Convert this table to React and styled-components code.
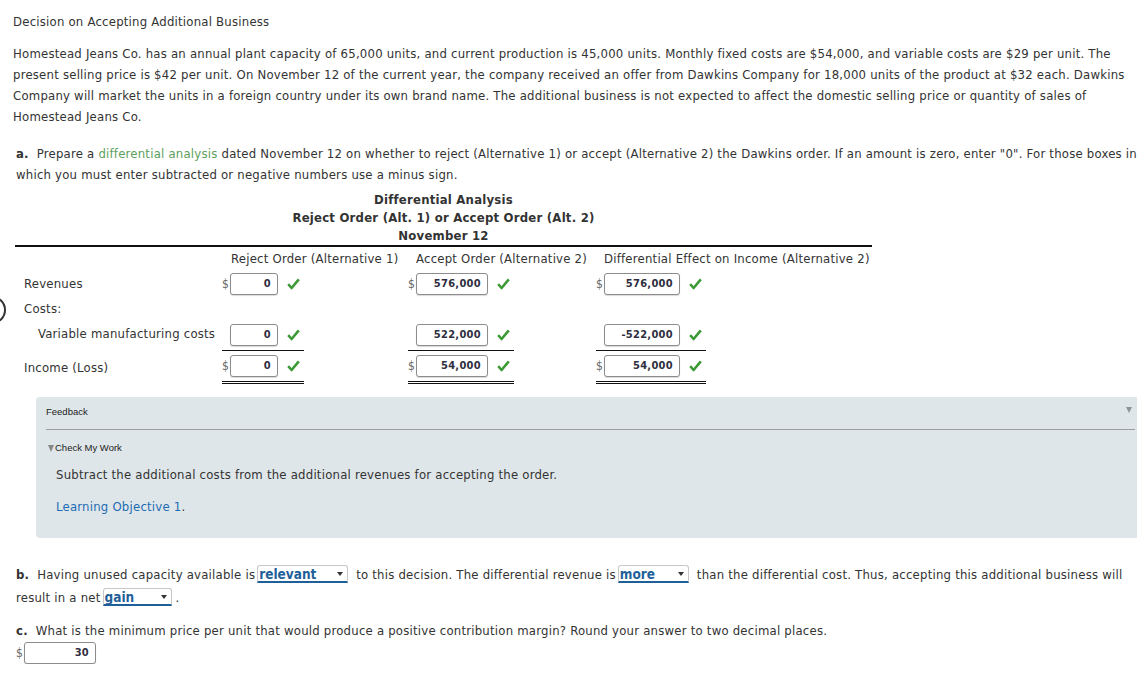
import React from "react";
import styled, { createGlobalStyle } from "styled-components";

const Global = createGlobalStyle`
  html, body { margin: 0; padding: 0; background: #fff; overflow: hidden; }
  body {
    font-family: "DejaVu Sans", Verdana, sans-serif;
    font-stretch: semi-condensed;
    font-size: 13px;
    letter-spacing: 0.22px;
    color: #333;
  }
`;

const Page = styled.div`
  position: relative;
  width: 1150px;
  padding: 12px 0 0 13px;
  box-sizing: border-box;
`;

const Title = styled.div`
  line-height: 20px;
`;

const Para = styled.p`
  margin: ${(p) => p.$mt || 0}px 0 0 ${(p) => p.$ml || 0}px;
  line-height: ${(p) => p.$lh || 21}px;
  white-space: nowrap;
`;

const Bold = styled.b`
  font-weight: bold;
  margin-right: 4px;
`;

const GreenLink = styled.span`
  color: #5e9e5e;
`;

const BlueLink = styled.span`
  color: #1c6cb4;
`;

const Heading = styled.div`
  width: 857px;
  margin: 6px 0 0 2px;
  text-align: center;
  font-weight: bold;
  line-height: 18px;
`;

const Table = styled.div`
  width: 857px;
  margin-left: 2px;
  border-top: 2px solid #111;
  display: grid;
  grid-template-columns: 207px 186px 188px 276px;
`;

const HeadCell = styled.div`
  height: 24px;
  line-height: 24px;
  padding-left: ${(p) => p.$pl || 8}px;
  white-space: nowrap;
`;

const LabelCell = styled.div`
  height: ${(p) => p.$h}px;
  box-sizing: border-box;
  display: flex;
  align-items: ${(p) => (p.$top ? "flex-start" : "center")};
  padding: ${(p) => p.$top || 0}px 0 0 ${(p) => p.$indent || 9}px;
  line-height: 22px;
  white-space: nowrap;
`;

const ValueCell = styled.div`
  height: ${(p) => p.$h}px;
  display: flex;
  align-items: ${(p) => (p.$rule ? "flex-start" : "center")};
`;

const Amount = styled.div`
  display: inline-flex;
  align-items: center;
  padding: ${(p) => (p.$rule === "single" ? "3px 4px 4px 0" : p.$rule === "double" ? "4px 4px 4px 0" : "0 4px 0 0")};
  border-bottom: ${(p) =>
    p.$rule === "single" ? "1px solid #111" : p.$rule === "double" ? "3px double #111" : "none"};
`;

const Dollar = styled.span`
  width: 8px;
  font-size: 12px;
  letter-spacing: 0;
  color: #666;
  line-height: 22px;
`;

const NumBox = styled.div`
  width: ${(p) => p.$w}px;
  height: 22px;
  box-sizing: border-box;
  border: 1px solid #8c8c8c;
  border-radius: 3px;
  box-shadow: 0 1px 1px rgba(0, 0, 0, 0.15);
  background: #fff;
  text-align: right;
  padding-right: 6px;
  font-size: 11px;
  letter-spacing: 0.3px;
  font-weight: bold;
  line-height: 20px;
  color: #2e2e3e;
`;

const Check = styled.svg`
  width: 13px;
  height: 12px;
  margin-left: 9px;
  flex: none;
`;

const Tick = () => (
  <Check viewBox="0 0 13 12">
    <path d="M1.2 6.2 L4.6 10 L11.8 1.4" fill="none" stroke="#3c9a36" strokeWidth="2.6" strokeLinejoin="round" />
  </Check>
);

const Feedback = styled.div`
  margin: 13px 0 0 23px;
  width: 1109px;
  height: 141px;
  background: #dfe6e9;
  border-radius: 4px;
  box-sizing: border-box;
  padding: 0 10px;
`;

const FbHead = styled.div`
  position: relative;
  height: 32px;
  border-bottom: 1px solid #9a9fa2;
  font-family: "Liberation Sans", Arial, sans-serif;
  font-size: 9.5px;
  letter-spacing: 0;
  color: #222;
  line-height: 30px;
`;

const Caret = styled.span`
  position: absolute;
  right: 3px;
  top: 10px;
  width: 0;
  height: 0;
  border-left: 3.5px solid transparent;
  border-right: 3.5px solid transparent;
  border-top: 6px solid #8d9497;
`;

const CheckWork = styled.div`
  margin: 12px 0 0 2px;
  font-family: "Liberation Sans", Arial, sans-serif;
  font-size: 9.5px;
  letter-spacing: 0;
  color: #222;
  line-height: 12px;
  display: flex;
  align-items: center;
`;

const SmallTri = styled.span`
  width: 0;
  height: 0;
  border-left: 3.5px solid transparent;
  border-right: 3.5px solid transparent;
  border-top: 7px solid #888;
  margin-right: 1px;
`;

const FbText = styled.div`
  margin: ${(p) => p.$mt}px 0 0 10px;
  line-height: 20px;
`;

const Select = styled.span`
  display: inline-flex;
  align-items: center;
  justify-content: space-between;
  vertical-align: middle;
  width: ${(p) => p.$w}px;
  height: 18px;
  box-sizing: border-box;
  margin: -3px 0 0 ${(p) => p.$ml || 2}px;
  padding: 0 4px 0 1px;
  border: 1px solid #c8c8c8;
  border-bottom: 2px solid #1f5f99;
  border-radius: 3px 3px 0 0;
  background: #fff;
  color: #1f5f99;
  font-weight: bold;
  font-size: 13.5px;
  letter-spacing: 0;
  line-height: 14px;
`;

const SelArrow = styled.span`
  width: 0;
  height: 0;
  border-left: 3.5px solid transparent;
  border-right: 3.5px solid transparent;
  border-top: 4px solid #333;
`;

const Row = styled.div`
  display: flex;
  align-items: center;
  margin: ${(p) => p.$mt}px 0 0 ${(p) => p.$ml || 0}px;
`;

const Circle = styled.div`
  position: absolute;
  left: -22px;
  top: 296px;
  width: 24px;
  height: 24px;
  border: 2.5px solid #333;
  border-radius: 50%;
`;

const Gap = styled.span`
  display: inline-block;
  width: ${(p) => p.$w}px;
`;

const Sel = ({ w, children, ml }) => (
  <Select $w={w} $ml={ml}>
    <span>{children}</span>
    <SelArrow />
  </Select>
);

const Amt = ({ w, v, dollar, rule }) => (
  <Amount $rule={rule}>
    <Dollar>{dollar ? "$" : ""}</Dollar>
    <NumBox $w={w}>{v}</NumBox>
    <Tick />
  </Amount>
);

export default function App() {
  return (
    <>
      <Global />
      <Page>
        <Circle />
        <Title>Decision on Accepting Additional Business</Title>
        <Para $mt={11}>
          Homestead Jeans Co. has an annual plant capacity of 65,000 units, and current production is 45,000 units. Monthly fixed costs are $54,000, and variable costs are $29 per unit. The
          <br />
          present selling price is $42 per unit. On November 12 of the current year, the company received an offer from Dawkins Company for 18,000 units of the product at $32 each. Dawkins
          <br />
          Company will market the units in a foreign country under its own brand name. The additional business is not expected to affect the domestic selling price or quantity of sales of
          <br />
          Homestead Jeans Co.
        </Para>
        <Para $mt={16} $ml={3}>
          <Bold>a.</Bold> Prepare a <GreenLink>differential analysis</GreenLink> dated November 12 on whether to reject (Alternative 1) or accept (Alternative 2) the Dawkins order. If an amount is zero, enter "0". For those boxes in
          <br />
          which you must enter subtracted or negative numbers use a minus sign.
        </Para>
        <Heading>
          Differential Analysis
          <br />
          Reject Order (Alt. 1) or Accept Order (Alt. 2)
          <br />
          November 12
        </Heading>
        <Table>
          <HeadCell />
          <HeadCell $pl={9}>Reject Order (Alternative 1)</HeadCell>
          <HeadCell>Accept Order (Alternative 2)</HeadCell>
          <HeadCell>Differential Effect on Income (Alternative 2)</HeadCell>

          <LabelCell $h={26}>Revenues</LabelCell>
          <ValueCell $h={26}><Amt w={48} v="0" dollar /></ValueCell>
          <ValueCell $h={26}><Amt w={72} v="576,000" dollar /></ValueCell>
          <ValueCell $h={26}><Amt w={76} v="576,000" dollar /></ValueCell>

          <LabelCell $h={24}>Costs:</LabelCell>
          <ValueCell $h={24} />
          <ValueCell $h={24} />
          <ValueCell $h={24} />

          <LabelCell $h={30} $top={2} $indent={23}>Variable manufacturing costs</LabelCell>
          <ValueCell $h={30} $rule><Amt w={48} v="0" rule="single" /></ValueCell>
          <ValueCell $h={30} $rule><Amt w={72} v="522,000" rule="single" /></ValueCell>
          <ValueCell $h={30} $rule><Amt w={76} v="-522,000" rule="single" /></ValueCell>

          <LabelCell $h={33} $top={6}>Income (Loss)</LabelCell>
          <ValueCell $h={33} $rule><Amt w={48} v="0" dollar rule="double" /></ValueCell>
          <ValueCell $h={33} $rule><Amt w={72} v="54,000" dollar rule="double" /></ValueCell>
          <ValueCell $h={33} $rule><Amt w={76} v="54,000" dollar rule="double" /></ValueCell>
        </Table>
        <Feedback>
          <FbHead>
            Feedback
            <Caret />
          </FbHead>
          <CheckWork>
            <SmallTri />
            Check My Work
          </CheckWork>
          <FbText $mt={11}>Subtract the additional costs from the additional revenues for accepting the order.</FbText>
          <FbText $mt={12}>
            <BlueLink>Learning Objective 1</BlueLink>.
          </FbText>
        </Feedback>
        <Para $mt={25} $ml={3} $lh={23}>
          <Bold>b.</Bold> Having unused capacity available is<Sel w={91}>relevant</Sel>
          <Gap $w={8} />to this decision. The differential revenue is<Sel w={71}>more</Sel>
          <Gap $w={8} />than the differential cost. Thus, accepting this additional business will
          <br />
          result in a net<Sel w={69}>gain</Sel> .
        </Para>
        <Para $mt={10} $ml={3} $lh={23}>
          <Bold>c.</Bold> What is the minimum price per unit that would produce a positive contribution margin? Round your answer to two decimal places.
        </Para>
        <Row $mt={0} $ml={3}>
          <Dollar>$</Dollar>
          <NumBox $w={72}>30</NumBox>
        </Row>
      </Page>
    </>
  );
}
